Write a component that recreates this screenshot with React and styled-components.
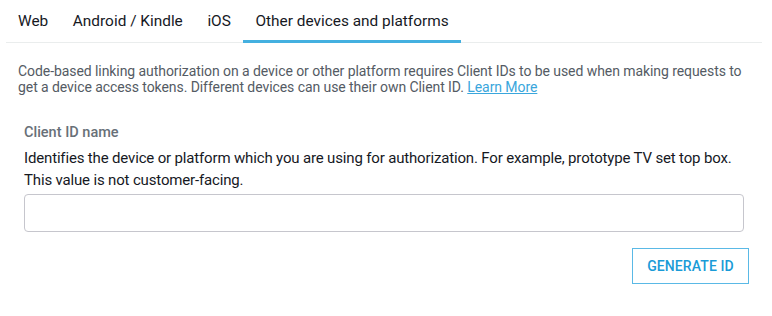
import React from "react";
import styled, { createGlobalStyle } from "styled-components";

const Global = createGlobalStyle`
  html, body { margin: 0; padding: 0; background: #ffffff; }
  body { font-family: Roboto, "Noto Sans", "Liberation Sans", sans-serif; }
  * { box-sizing: border-box; }
`;

const Page = styled.div`
  width: 772px;
  height: 316px;
  padding: 0 10px 0 6px;
  background: #fff;
`;

const TabBar = styled.div`
  display: flex;
  height: 43px;
  border-bottom: 1px solid #eaeded;
`;

const Tab = styled.div`
  padding: 1px 12.6px 0 12px;
  height: 43px;
  display: flex;
  align-items: center;
  font-size: 15.4px;
  color: #16191f;
  border-bottom: 3px solid ${(p) => (p.$active ? "#44b0e0" : "transparent")};
  margin-bottom: -2px;
  cursor: pointer;
`;

const Body = styled.div`
  padding: 20px 12px 0 12px;
`;

const Intro = styled.p`
  margin: 0;
  font-size: 14px;
  line-height: 16px;
  color: #545b64;
  letter-spacing: -0.07px;
`;

const Link = styled.a`
  color: #3aa6dc;
  text-decoration: underline;
`;

const Field = styled.div`
  margin-top: 28px;
  padding-left: 6px;
  display: flex;
  flex-direction: column;
`;

const Label = styled.label`
  font-size: 14.5px;
  line-height: 20px;
  font-weight: 500;
  color: #687078;
`;

const Hint = styled.div`
  margin-top: 4px;
  font-size: 15px;
  line-height: 22px;
  color: #16191f;
  letter-spacing: -0.16px;
`;

const Input = styled.input`
  margin-top: 3px;
  width: 720px;
  height: 38px;
  border: 1px solid #c6c6cd;
  border-radius: 4px;
  font: inherit;
  padding: 0 10px;
  outline: none;
`;

const Actions = styled.div`
  display: flex;
  justify-content: flex-end;
  margin-top: 16px;
  width: 731px;
`;

const Button = styled.button`
  width: 117px;
  height: 36px;
  background: #fff;
  border: 1px solid #5ab9e6;
  color: #1a9bd7;
  font-family: inherit;
  font-size: 14px;
  font-weight: 500;
  letter-spacing: 0.1px;
  cursor: pointer;
`;

export default function App() {
  return (
    <>
      <Global />
      <Page>
        <TabBar>
          <Tab>Web</Tab>
          <Tab>Android / Kindle</Tab>
          <Tab>iOS</Tab>
          <Tab $active>Other devices and platforms</Tab>
        </TabBar>
        <Body>
          <Intro>
            Code-based linking authorization on a device or other platform requires Client IDs to be used when making requests to
            get a device access tokens. Different devices can use their own Client ID. <Link href="#">Learn More</Link>
          </Intro>
          <Field>
            <Label>Client ID name</Label>
            <Hint>
              Identifies the device or platform which you are using for authorization. For example, prototype TV set top box.
              <br />
              This value is not customer-facing.
            </Hint>
            <Input type="text" />
          </Field>
          <Actions>
            <Button>GENERATE ID</Button>
          </Actions>
        </Body>
      </Page>
    </>
  );
}
